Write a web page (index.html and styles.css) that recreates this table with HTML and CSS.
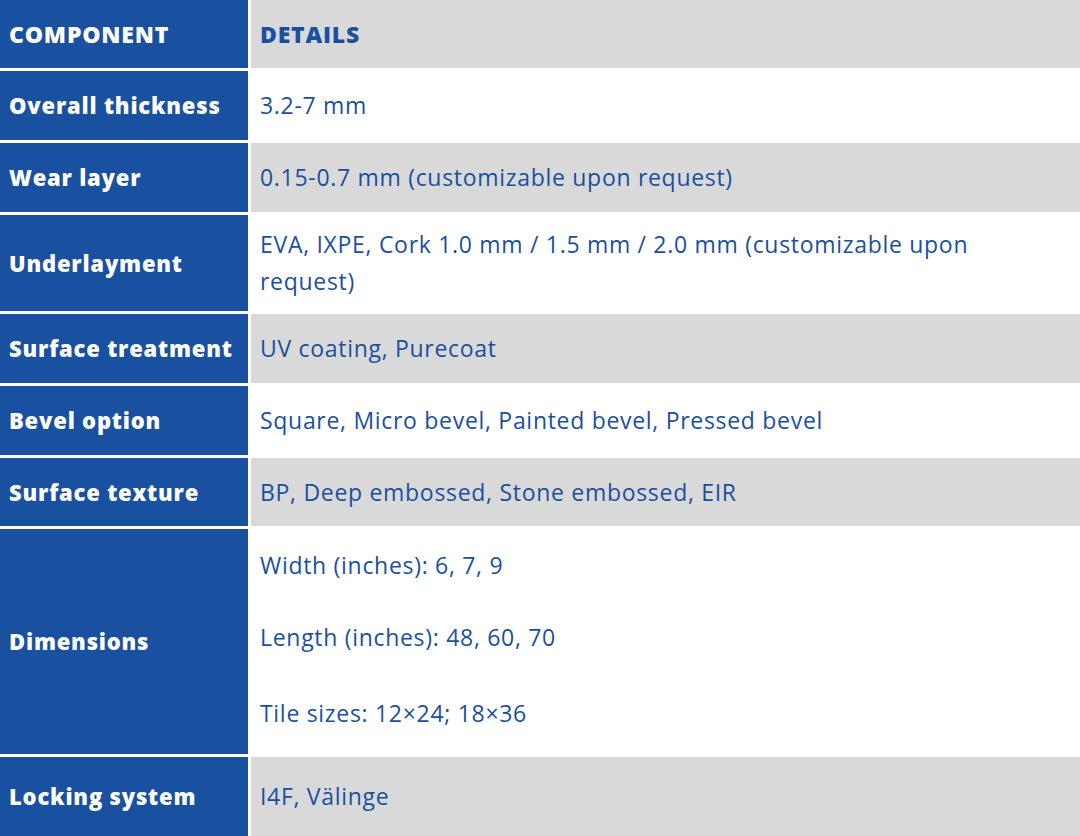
FILE: index.html
```html
<!DOCTYPE html>
<html>
<head>
<meta charset="utf-8">
<link rel="stylesheet" href="styles.css">
</head>
<body>
<div class="table">
  <div class="cell label head">COMPONENT</div>
  <div class="cell detail grey head">DETAILS</div>

  <div class="cell label">Overall thickness</div>
  <div class="cell detail">3.2-7 mm</div>

  <div class="cell label">Wear layer</div>
  <div class="cell detail grey">0.15-0.7 mm (customizable upon request)</div>

  <div class="cell label">Underlayment</div>
  <div class="cell detail">EVA, IXPE, Cork 1.0 mm / 1.5 mm / 2.0 mm (customizable upon request)</div>

  <div class="cell label">Surface treatment</div>
  <div class="cell detail grey">UV coating, Purecoat</div>

  <div class="cell label">Bevel option</div>
  <div class="cell detail">Square, Micro bevel, Painted bevel, Pressed bevel</div>

  <div class="cell label">Surface texture</div>
  <div class="cell detail grey">BP, Deep embossed, Stone embossed, EIR</div>

  <div class="cell label">Dimensions</div>
  <div class="cell detail dims">
    <p>Width (inches): 6, 7, 9</p>
    <p class="p2">Length (inches): 48, 60, 70</p>
    <p class="p3">Tile sizes: 12×24; 18×36</p>
  </div>

  <div class="cell label">Locking system</div>
  <div class="cell detail grey">I4F, Välinge</div>
</div>
</body>
</html>
```

FILE: styles.css
```css
html, body {
  margin: 0;
  padding: 0;
  background: #ffffff;
}

body {
  width: 1080px;
  height: 836px;
  overflow: hidden;
  font-family: "Open Sans", "Liberation Sans", sans-serif;
}

.table {
  display: grid;
  grid-template-columns: 248px 829px;
  grid-template-rows: 68px 69px 69px 96px 69px 69px 68px 225px 79px;
  column-gap: 3px;
  row-gap: 3px;
  background: #ffffff;
}

.cell {
  display: flex;
  flex-direction: column;
  justify-content: center;
  box-sizing: border-box;
  line-height: 37px;
}

.label {
  background: #1a50a0;
  color: #ffffff;
  font-size: 22px;
  font-weight: 800;
  letter-spacing: 0.8px;
  padding: 0 0 0 9px;
  white-space: nowrap;
}

.detail {
  background: #ffffff;
  color: #1a50a0;
  font-size: 23px;
  font-weight: 400;
  letter-spacing: 0.7px;
  padding: 0 40px 0 9px;
}

.grey {
  background: #d9d9d9;
}

.head {
  font-size: 23px;
  font-weight: 800;
  letter-spacing: 0.8px;
  padding-top: 1px;
}

.dims {
  padding-bottom: 5px;
}

.dims p {
  margin: 0;
}

.dims .p2 {
  margin-top: 35px;
}

.dims .p3 {
  margin-top: 39px;
}
```
